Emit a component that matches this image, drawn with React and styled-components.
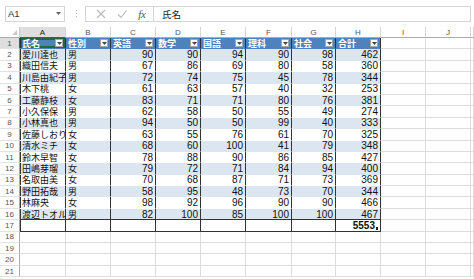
import React from 'react';
import styled, { createGlobalStyle } from 'styled-components';

const DARK = '#333333';
const GRID = '#dcdcdc';
const BLUE = '#4f81bd';
const BAND = '#dce6f1';

const GlobalStyle = createGlobalStyle`
  html, body { margin: 0; padding: 0; background: #fff; }
  body { font-family: "Liberation Sans", "Noto Sans CJK JP", sans-serif; overflow: hidden; }
`;

const Window = styled.div`
  width: 474px;
  height: 279px;
  overflow: hidden;
  display: flex;
  flex-direction: column;
  background: #fff;
`;

const FormulaBar = styled.div`
  height: 27px;
  flex-shrink: 0;
  display: flex;
  align-items: center;
  padding: 0 3px 0 5px;
  box-sizing: border-box;
`;

const NameBox = styled.div`
  width: 60px;
  height: 16px;
  box-sizing: border-box;
  border: 1px solid #d4d4d4;
  display: flex;
  align-items: center;
  justify-content: space-between;
  padding: 0 3px 0 2px;
  font-family: "Liberation Sans", sans-serif;
  font-size: 9.5px;
  color: #333;
`;

const Separator = styled.div`
  width: 20px;
  height: 16px;
  display: flex;
  flex-direction: column;
  justify-content: center;
  gap: 2px;
  padding-left: 11px;
  box-sizing: border-box;
`;

const Dot = styled.span`
  width: 1px;
  height: 1px;
  background: #b5b5b5;
`;

const ButtonGroup = styled.div`
  width: 68px;
  height: 16px;
  box-sizing: border-box;
  border: 1px solid #d4d4d4;
  border-right: none;
  display: flex;
  align-items: center;
  justify-content: space-around;
  padding: 0 2px 0 4px;
`;

const FxLabel = styled.span`
  font-family: "Liberation Serif", serif;
  font-style: italic;
  font-size: 11px;
  color: #555;
  letter-spacing: -0.5px;
`;

const FormulaInput = styled.div`
  flex: 1;
  height: 16px;
  box-sizing: border-box;
  border: 1px solid #d4d4d4;
  display: flex;
  align-items: center;
  padding-left: 8px;
  font-family: "Noto Sans CJK JP", sans-serif;
  font-size: 9.5px;
  color: #222;
`;

const Sheet = styled.div`
  display: grid;
  grid-template-columns: 20px 46px 45px 45px 45px 45px 46px 44px 45px 45px 45px 1fr;
  grid-template-rows: 11px;
  grid-auto-rows: 11.4px;
`;

const Corner = styled.div`
  box-sizing: border-box;
  border-right: 1px solid #c8c8c8;
  border-bottom: 1px solid #ababab;
  display: flex;
  align-items: flex-end;
  justify-content: flex-end;
  padding: 0 2px 2px 0;
`;

const ColHead = styled.div`
  box-sizing: border-box;
  background: ${p => (p.$selected ? '#dedede' : '#fff')};
  border-right: 1px solid #d6d6d6;
  border-bottom: 1px solid ${p => (p.$selected ? '#217346' : '#ababab')};
  display: flex;
  align-items: center;
  justify-content: center;
  font-family: "Liberation Sans", sans-serif;
  font-size: 8px;
  color: ${p => (p.$selected ? '#222' : '#555')};
`;

const RowHead = styled.div`
  box-sizing: border-box;
  background: ${p => (p.$selected ? '#dedede' : '#fff')};
  border-right: 1px solid ${p => (p.$selected ? '#217346' : '#ababab')};
  border-bottom: 1px solid #e2e2e2;
  display: flex;
  align-items: center;
  justify-content: center;
  font-family: "Liberation Sans", sans-serif;
  font-size: 8px;
  color: #555;
`;

const fills = { head: BLUE, band: BAND, plain: '#fff', blank: '#fff' };

const Cell = styled.div`
  box-sizing: border-box;
  min-width: 0;
  overflow: hidden;
  white-space: nowrap;
  display: flex;
  align-items: center;
  justify-content: ${p => (p.$num ? 'flex-end' : p.$tone === 'head' ? 'space-between' : 'flex-start')};
  gap: 1px;
  padding: ${p => (p.$num ? '0 2px 0 0' : p.$tone === 'head' ? '0 2px 0 2px' : '0 0 0 2px')};
  background: ${p => fills[p.$tone]};
  color: ${p => (p.$tone === 'head' ? '#fff' : '#111')};
  font-family: ${p => (p.$num ? '"Liberation Sans", Arial, sans-serif' : '"Noto Sans CJK JP", sans-serif')};
  font-size: ${p => (p.$num ? '10px' : '9px')};
  font-weight: ${p => (p.$bold || p.$tone === 'head' ? 700 : 400)};
  line-height: 11px;
  border-right: 1px solid ${p => (p.$tone === 'blank' ? GRID : DARK)};
  border-bottom: 1px solid ${p => (p.$closed ? DARK : p.$tone === 'blank' ? GRID : fills[p.$tone])};
  box-shadow: ${p => [p.$first ? `inset 1px 0 0 ${DARK}` : null, p.$active ? 'inset 0 0 0 2px #1e6b40' : null].filter(Boolean).join(', ') || 'none'};
`;

const FilterButton = styled.span`
  flex-shrink: 0;
  width: 8px;
  height: 8px;
  box-sizing: border-box;
  background: #fdfdfd;
  border: 1px solid #a6a6a6;
  display: flex;
  align-items: center;
  justify-content: center;
`;

const TotalMark = styled.span`
  width: 2px;
  height: 3px;
  background: #222;
  align-self: flex-end;
  margin-bottom: 1px;
`;

const COLS = ['A', 'B', 'C', 'D', 'E', 'F', 'G', 'H', 'I', 'J', ''];
const HEADERS = ['氏名', '性別', '英語', '数学', '国語', '理科', '社会', '合計'];
const DATA = [
  ['愛川達也', '男', 90, 90, 94, 90, 98, 462],
  ['織田信夫', '男', 67, 86, 69, 80, 58, 360],
  ['川島由紀子', '男', 72, 74, 75, 45, 78, 344],
  ['木下桃', '女', 61, 63, 57, 40, 32, 253],
  ['工藤静枝', '女', 83, 71, 71, 80, 76, 381],
  ['小久保保', '男', 62, 58, 50, 55, 49, 274],
  ['小林真也', '男', 94, 50, 50, 99, 40, 333],
  ['佐藤しおり', '女', 63, 55, 76, 61, 70, 325],
  ['清水ミチ', '女', 68, 60, 100, 41, 79, 348],
  ['鈴木早智', '女', 78, 88, 90, 86, 85, 427],
  ['田嶋芽瑠', '女', 79, 72, 71, 84, 94, 400],
  ['名取由美', '女', 70, 68, 87, 71, 73, 369],
  ['野田拓哉', '男', 58, 95, 48, 73, 70, 344],
  ['林麻央', '女', 98, 92, 96, 90, 90, 466],
  ['渡辺トオル', '男', 82, 100, 85, 100, 100, 467],
];

const Caret = () => (
  <svg width="5" height="3" viewBox="0 0 5 3">
    <path d="M0 0 H5 L2.5 3 Z" fill="#444" />
  </svg>
);

const BlankTail = ({ row }) =>
  [0, 1, 2].map(i => <Cell key={`t${row}-${i}`} $tone="blank" />);

export default function App() {
  const rows = [];

  rows.push(<RowHead key="rh1" $selected>1</RowHead>);
  HEADERS.forEach((h, i) => {
    rows.push(
      <Cell key={`h${i}`} $tone="head" $first={i === 0} $active={i === 0}>
        <span>{h}</span>
        <FilterButton><Caret /></FilterButton>
      </Cell>
    );
  });
  rows.push(<BlankTail key="bt1" row={1} />);

  DATA.forEach((r, idx) => {
    const rowNum = idx + 2;
    const tone = rowNum % 2 === 0 ? 'band' : 'plain';
    const last = rowNum === 16;
    rows.push(<RowHead key={`rh${rowNum}`}>{rowNum}</RowHead>);
    r.forEach((v, ci) => {
      rows.push(
        <Cell
          key={`c${rowNum}-${ci}`}
          $tone={tone}
          $num={typeof v === 'number'}
          $first={ci === 0}
          $closed={last}
        >
          {v}
        </Cell>
      );
    });
    rows.push(<BlankTail key={`bt${rowNum}`} row={rowNum} />);
  });

  rows.push(<RowHead key="rh17">17</RowHead>);
  for (let ci = 0; ci < 8; ci++) {
    rows.push(
      <Cell key={`c17-${ci}`} $tone="plain" $first={ci === 0} $closed $num={ci === 7} $bold={ci === 7}>
        {ci === 7 ? (
          <>
            <span>5553</span>
            <TotalMark />
          </>
        ) : null}
      </Cell>
    );
  }
  rows.push(<BlankTail key="bt17" row={17} />);

  for (let r = 18; r <= 21; r++) {
    rows.push(<RowHead key={`rh${r}`}>{r}</RowHead>);
    for (let ci = 0; ci < 11; ci++) rows.push(<Cell key={`c${r}-${ci}`} $tone="blank" />);
  }

  return (
    <>
      <GlobalStyle />
      <Window>
        <FormulaBar>
          <NameBox>
            <span>A1</span>
            <svg width="5" height="3" viewBox="0 0 5 3">
              <path d="M0 0 H5 L2.5 3 Z" fill="#666" />
            </svg>
          </NameBox>
          <Separator>
            <Dot />
            <Dot />
            <Dot />
          </Separator>
          <ButtonGroup>
            <svg width="10" height="10" viewBox="0 0 10 10">
              <path d="M1 1 L9 9 M9 1 L1 9" stroke="#b8b8b8" strokeWidth="1.1" fill="none" />
            </svg>
            <svg width="10" height="10" viewBox="0 0 10 10">
              <path d="M1 5.5 L4 8.5 L9.5 1.5" stroke="#b8b8b8" strokeWidth="1.1" fill="none" />
            </svg>
            <FxLabel>fx</FxLabel>
          </ButtonGroup>
          <FormulaInput>氏名</FormulaInput>
        </FormulaBar>
        <Sheet>
          <Corner>
            <svg width="5" height="5" viewBox="0 0 5 5">
              <path d="M5 0 V5 H0 Z" fill="#c9c9c9" />
            </svg>
          </Corner>
          {COLS.map((c, i) => (
            <ColHead key={`col${i}`} $selected={i === 0}>{c}</ColHead>
          ))}
          {rows}
        </Sheet>
      </Window>
    </>
  );
}
